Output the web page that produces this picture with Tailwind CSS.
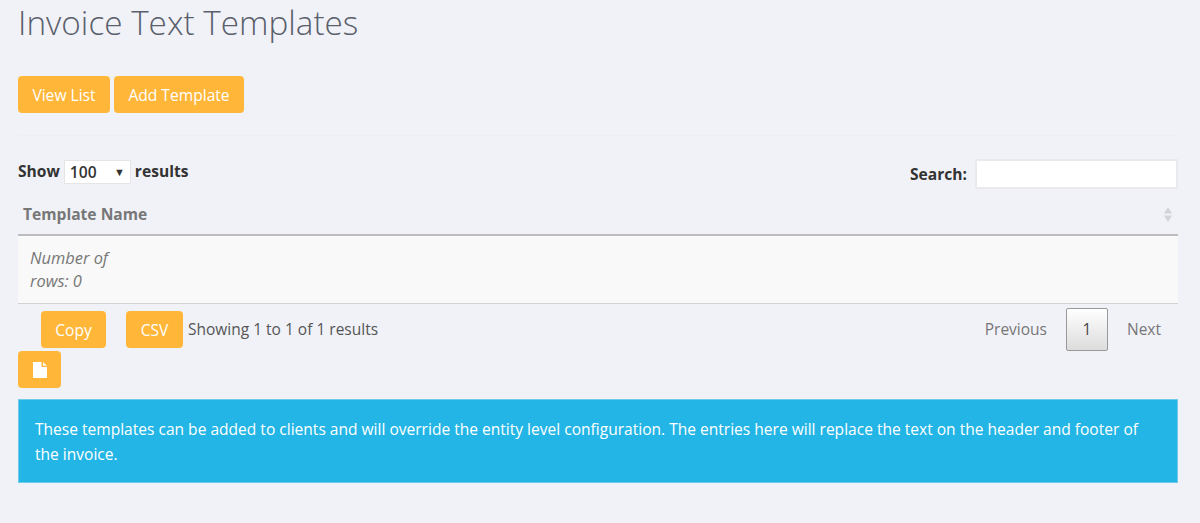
<!DOCTYPE html>
<html>
<head>
<meta charset="utf-8">
<script src="https://cdn.jsdelivr.net/npm/@tailwindcss/browser@4"></script>
</head>
<body class="bg-[#f1f2f8] font-['Open_Sans',sans-serif] text-[15.5px] text-[#555] overflow-hidden">
<div class="w-[1200px] h-[523px] pl-[18px] pr-[22px] overflow-hidden">
  <h1 class="h-[76px] pt-[1px] text-[33.3px] leading-[42px] font-light text-[#5a5f6b]">Invoice Text Templates</h1>
  <div class="flex gap-[4px] h-[37px]">
    <a class="h-[37px] w-[92px] pt-[2px] flex items-center justify-center rounded-[4px] bg-[#ffb639] text-white text-[15.6px]">View List</a>
    <a class="h-[37px] w-[130px] pt-[2px] flex items-center justify-center rounded-[4px] bg-[#ffb639] text-white text-[15.6px]">Add Template</a>
  </div>
  <div class="mt-[22px] h-px bg-[#eeeff3]"></div>
  <div class="mt-[23px] h-[30px] flex justify-between">
    <div class="flex items-center h-[25px] gap-[4px] font-bold text-[#333] text-[15.6px]">
      <span>Show</span>
      <span class="relative w-[67px] h-[24px] bg-white border border-[#e5e5e8] pl-[5px] leading-[22px] font-semibold">100<span class="absolute right-[5px] top-0 text-[11px] text-[#333]">▼</span></span>
      <span>results</span>
    </div>
    <div class="flex items-center h-[30px] gap-[8px] font-bold text-[#333] text-[15.6px]">
      <span class="pt-[2px]">Search:</span>
      <span class="block w-[203px] h-[30px] bg-white border-2 border-[#e9e9ee]"></span>
    </div>
  </div>
  <div class="h-[47px] flex items-center justify-between pl-[5px] pr-[5px] pt-[6px] border-b-2 border-[#bdbdc0] font-bold text-[#777] text-[15.6px]">
    <span>Template Name</span>
    <svg width="10" height="17" viewBox="0 0 10 17"><path d="M5 1l4 6.500H1z M5 16l4-6.500H1z" fill="#d3d4d9"/></svg>
  </div>
  <div class="h-[68px] bg-[#f9f9f9] border-b border-[#d3d3d5] px-[12px] py-[11px] italic text-[16.4px] text-[#777] leading-[22.5px]">
    <div>Number of</div><div>rows: 0</div>
  </div>
  <div class="flex justify-between h-[47px]">
    <div class="flex items-start pt-[7px]">
      <a class="ml-[23px] h-[37px] w-[65px] pt-[2px] flex items-center justify-center rounded-[4px] bg-[#ffb639] text-white">Copy</a>
      <a class="ml-[20px] h-[37px] w-[57px] pt-[2px] flex items-center justify-center rounded-[4px] bg-[#ffb639] text-white">CSV</a>
      <span class="ml-[5px] leading-[36px] text-[#555]">Showing 1 to 1 of 1 results</span>
    </div>
    <div class="flex items-start pt-[4px] pr-[17px] text-[#777]">
      <span class="mr-[19px] leading-[43px]">Previous</span>
      <span class="w-[42px] h-[43px] flex items-center justify-center rounded-[2px] border border-[#999] bg-gradient-to-b from-white to-[#dcdcdc] text-[#444]">1</span>
      <span class="ml-[19px] leading-[43px]">Next</span>
    </div>
  </div>
  <a class="flex items-center justify-center h-[37px] w-[43px] rounded-[4px] bg-[#ffb639]">
    <svg width="14" height="16" viewBox="0 0 14 16"><path d="M0 0h8.500v5H14v11H0z M10 0l4 3.800H10z" fill="#fff"/></svg>
  </a>
  <div class="mt-[11px] h-[84px] bg-[#22b5e5] border border-[#6fcbea] text-white text-[15.55px] px-[16px] pt-[17px] leading-[25px]">These templates can be added to clients and will override the entity level configuration. The entries here will replace the text on the header and footer of the invoice.</div>
</div>
</body>
</html>
